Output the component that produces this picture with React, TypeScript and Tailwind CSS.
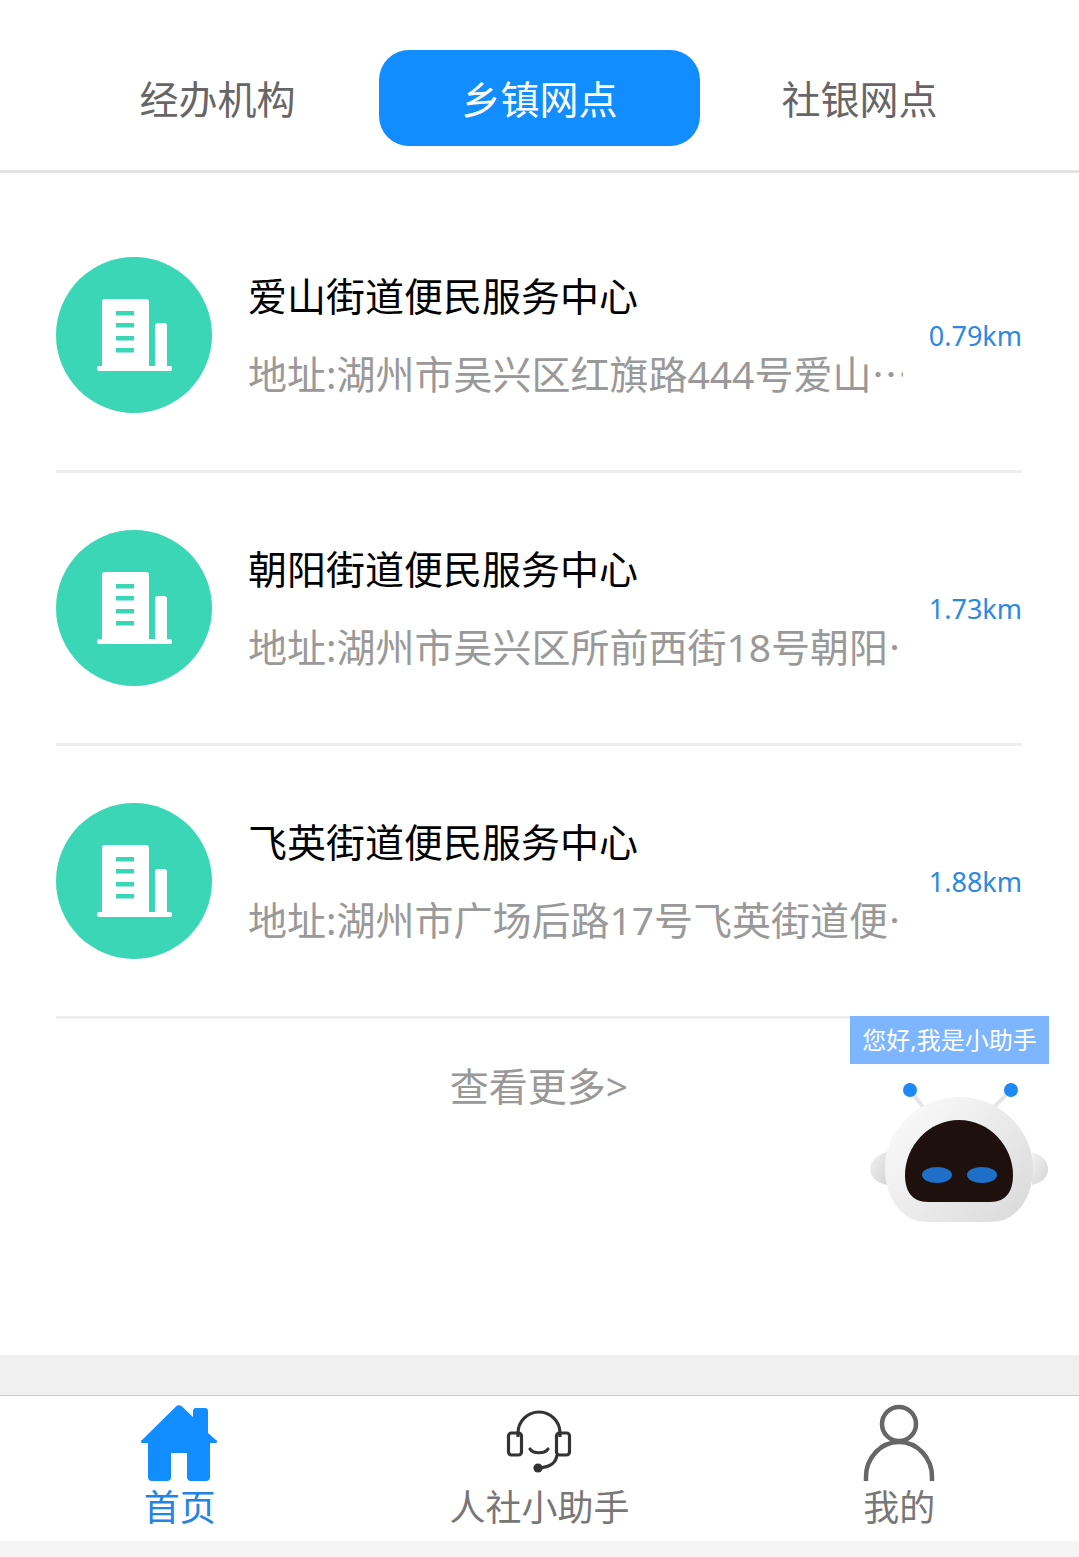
const sites = [
  { name: '爱山街道便民服务中心', address: '地址:湖州市吴兴区红旗路444号爱山', distance: '0.79km' },
  { name: '朝阳街道便民服务中心', address: '地址:湖州市吴兴区所前西街18号朝阳', distance: '1.73km' },
  { name: '飞英街道便民服务中心', address: '地址:湖州市广场后路17号飞英街道便', distance: '1.88km' },
]

function BuildingIcon() {
  return (
    <svg viewBox="0 0 156 156" className="w-[156px] h-[156px] flex-none">
      <circle cx="78" cy="78" r="78" fill="#3ad6b5" />
      <path d="M46 45a3 3 0 0 1 3-3h41a3 3 0 0 1 3 3v65H46z" fill="#fff" />
      <path d="M99 69a3 3 0 0 1 3-3h6a3 3 0 0 1 3 3v41H99z" fill="#fff" />
      <rect x="41" y="109" width="75" height="5" rx="2" fill="#fff" />
      <g fill="#3ad6b5">
        <rect x="60" y="54" width="18" height="4.5" />
        <rect x="60" y="66" width="18" height="4.5" />
        <rect x="60" y="79" width="18" height="4.5" />
        <rect x="60" y="91" width="18" height="4.5" />
      </g>
    </svg>
  )
}

function Robot() {
  return (
    <svg viewBox="0 0 200 160" className="w-[200px] h-[160px]">
      <defs>
        <linearGradient id="head" x1="0" y1="0.2" x2="1" y2="1">
          <stop offset="0" stopColor="#fafafa" />
          <stop offset="0.55" stopColor="#e8e8e8" />
          <stop offset="1" stopColor="#d8d8d8" />
        </linearGradient>
        <linearGradient id="ear" x1="0" y1="0" x2="1" y2="1">
          <stop offset="0" stopColor="#f2f2f2" />
          <stop offset="1" stopColor="#d4d4d4" />
        </linearGradient>
      </defs>
      <path d="M50 15L63 32M151 15L134 32" stroke="#e6e6e6" strokeWidth="4" />
      <circle cx="50" cy="15" r="7" fill="#1e88f5" />
      <circle cx="151" cy="15" r="7" fill="#1e88f5" />
      <path d="M27 77c-10 3-17 9-17 17s7 14 17 16z" fill="url(#ear)" />
      <path d="M172 77c10 3 16 9 16 17s-6 14-16 16z" fill="url(#ear)" />
      <path
        d="M99 22C140 22 173 55 173 93C173 115 165 132 150 142C145 146 135 147 125 147H73C63 147 53 146 48 142C33 132 25 115 25 93C25 55 58 22 99 22z"
        fill="url(#head)"
      />
      <path
        d="M99 45C130 45 153 72 153 100C153 115 147 127 130 127H68C51 127 45 115 45 100C45 72 68 45 99 45z"
        fill="#1e100c"
      />
      <ellipse cx="77" cy="100" rx="15" ry="8" fill="#1f6fc8" />
      <ellipse cx="122" cy="100" rx="15" ry="8" fill="#1f6fc8" />
    </svg>
  )
}

function HomeIcon() {
  return (
    <svg viewBox="0 0 80 80" className="w-20 h-20">
      <path
        d="M36 3.500a4 4 0 0 1 6 0L53 14V8a3 3 0 0 1 3-3h9a3 3 0 0 1 3 3v22l8 7a1.500 1.500 0 0 1-1 3h-5v34a4 4 0 0 1-4 4H51a4 4 0 0 1-4-4V50H31v24a4 4 0 0 1-4 4H12a4 4 0 0 1-4-4V40H3a1.500 1.500 0 0 1-1-3z"
        fill="#118dff"
      />
    </svg>
  )
}

function HeadsetIcon() {
  return (
    <svg viewBox="0 0 80 80" fill="none" stroke="#333" strokeWidth="3.2" className="w-20 h-20">
      <path d="M19 34v-4a21 21 0 0 1 42 0v4" />
      <rect x="9.500" y="30" width="13" height="22" rx="3" />
      <rect x="57.500" y="30" width="13" height="22" rx="3" />
      <path d="M31 46c3 5 15 5 18 0" strokeLinecap="round" />
      <path d="M58 52c-1 8-6 12-18 13" />
      <circle cx="39" cy="65" r="4.600" fill="#333" strokeWidth="0" />
    </svg>
  )
}

function UserIcon() {
  return (
    <svg viewBox="0 0 80 80" fill="none" stroke="#666" strokeWidth="4.500" className="w-20 h-20">
      <circle cx="40" cy="21" r="17" />
      <path d="M7 78v-4c0-19 14.500-35 33-35s33 16 33 35v4" />
    </svg>
  )
}

export default function App() {
  return (
    <div
      className="h-[1557px] flex flex-col bg-white overflow-hidden relative"
      style={{ fontFamily: '"Noto Sans", "Noto Sans CJK SC", sans-serif' }}
    >
      {/* Tabs */}
      <div className="h-[173px] flex-none border-b-[3px] border-[#e3e3e3] grid grid-cols-[379px_321px_379px] pt-[50px] text-[39px] text-[#666]">
        <div className="h-[96px] flex items-center justify-center pl-[56px] pt-[3px]">经办机构</div>
        <div className="h-[96px] flex items-center justify-center rounded-[30px] bg-[#118dff] text-white pt-[3px]">乡镇网点</div>
        <div className="h-[96px] flex items-center justify-center pr-[60px] pt-[3px]">社银网点</div>
      </div>

      {/* List */}
      <div className="flex-1 pl-[56px] pr-[57px] pt-[27px]">
        {sites.map((s) => (
          <div key={s.name} className="flex items-center py-[57px] border-b-[3px] border-[#eee]">
            <BuildingIcon />
            <div className="w-[654px] flex-none ml-[37px] overflow-hidden whitespace-nowrap text-[39px] leading-[78px]">
              <p className="h-[78px] text-black -ml-px">{s.name}</p>
              <p className="h-[78px] leading-[74px] text-[#999] -ml-px">
                {s.address}
                <span style={{ fontFamily: '"Noto Sans CJK SC", sans-serif' }}>…</span>
              </p>
            </div>
            <div className="ml-auto pt-[2px] text-[27px] text-[#2b88e3]">{s.distance}</div>
          </div>
        ))}
        <div className="text-center text-[39px] text-[#999] leading-[50px] mt-[42px]">查看更多&gt;</div>
      </div>

      {/* Helper */}
      <div className="absolute left-[850px] top-[1016px] w-[199px] h-[48px] flex items-center justify-center bg-[#7db5ff] text-white text-[24px]">
        您好,我是小助手
      </div>
      <div className="absolute left-[860px] top-[1075px]">
        <Robot />
      </div>

      {/* Bottom nav */}
      <div className="h-[40px] flex-none bg-[#f0f0f0]" />
      <div className="h-[146px] flex-none bg-white border-t border-[#ccc] grid grid-cols-3 text-[36px] leading-[46px] text-[#777]">
        <div className="flex flex-col items-center pt-[7px]">
          <HomeIcon />
          <span className="text-[#2484e4] mt-[2px]">首页</span>
        </div>
        <div className="flex flex-col items-center pt-[7px]">
          <HeadsetIcon />
          <span className="mt-[2px]">人社小助手</span>
        </div>
        <div className="flex flex-col items-center pt-[7px]">
          <UserIcon />
          <span className="mt-[2px]">我的</span>
        </div>
      </div>
      <div className="h-[16px] flex-none bg-[#f5f5f5]" />
    </div>
  )
}
